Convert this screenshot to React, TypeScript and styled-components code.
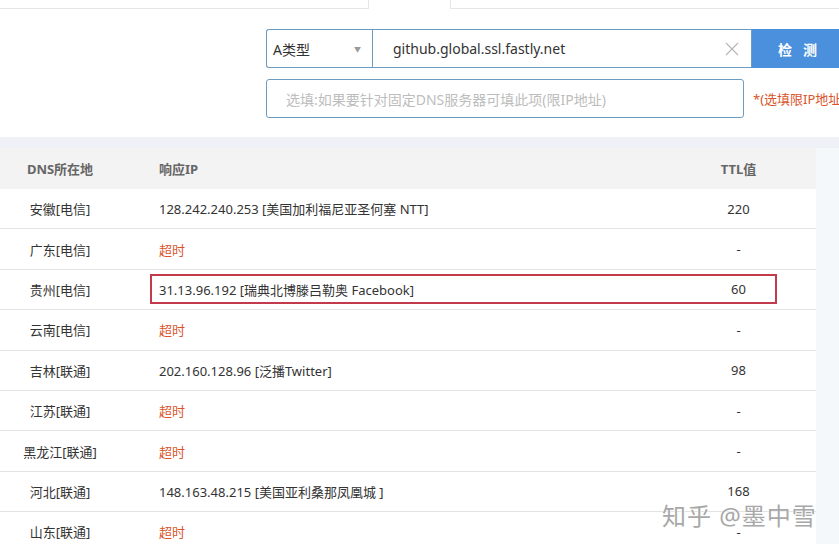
import React from "react";
import styled, { createGlobalStyle } from "styled-components";

const GlobalStyle = createGlobalStyle`
  html, body {
    margin: 0;
    padding: 0;
    background: #fff;
    overflow: hidden;
  }
  * {
    box-sizing: border-box;
    font-family: "Microsoft YaHei", "Noto Sans", "Noto Sans CJK SC", sans-serif;
  }
`;

// results of the DNS check
const rows = [
  { place: "安徽[电信]", ip: "128.242.240.253 [美国加利福尼亚圣何塞 NTT]", ttl: "220" },
  { place: "广东[电信]", timeout: true },
  { place: "贵州[电信]", ip: "31.13.96.192 [瑞典北博滕吕勒奥 Facebook]", ttl: "60", marked: true },
  { place: "云南[电信]", timeout: true },
  { place: "吉林[联通]", ip: "202.160.128.96 [泛播Twitter]", ttl: "98" },
  { place: "江苏[联通]", timeout: true },
  { place: "黑龙江[联通]", timeout: true },
  { place: "河北[联通]", ip: "148.163.48.215 [美国亚利桑那凤凰城 ]", ttl: "168" },
  { place: "山东[联通]", timeout: true },
];

export default function App() {
  return (
    <Page>
      <GlobalStyle />
      <Tabs>
        <TabFill width={368} />
        <ActiveTab />
        <TabFill />
      </Tabs>

      <Form>
        <FormRow>
          <Select>
            <span>A类型</span>
            <Caret>▼</Caret>
          </Select>
          <DomainInput>
            <span>github.global.ssl.fastly.net</span>
            <svg width="14" height="14" viewBox="0 0 14 14">
              <path d="M1 1L13 13M13 1L1 13" stroke="#b5b5b5" strokeWidth="1.1" />
            </svg>
          </DomainInput>
          <CheckButton>
            <span>检</span>
            <span>测</span>
          </CheckButton>
        </FormRow>
        <FormRow>
          <ServerInput>选填:如果要针对固定DNS服务器可填此项(限IP地址)</ServerInput>
          <Note>*(选填限IP地址)</Note>
        </FormRow>
      </Form>

      <Band />

      <Body>
        <Table>
          <HeadRow>
            <PlaceCell>DNS所在地</PlaceCell>
            <Result>
              <IpCell>响应IP</IpCell>
              <TtlCell>TTL值</TtlCell>
            </Result>
          </HeadRow>
          {rows.map((r) => (
            <Row key={r.place}>
              <PlaceCell>{r.place}</PlaceCell>
              <Result marked={r.marked}>
                {r.timeout ? (
                  <IpCell><Timeout>超时</Timeout></IpCell>
                ) : (
                  <IpCell>{r.ip}</IpCell>
                )}
                <TtlCell>{r.timeout ? "-" : r.ttl}</TtlCell>
              </Result>
            </Row>
          ))}
        </Table>
        <Side />
        <Watermark>知乎 @墨中雪</Watermark>
      </Body>
    </Page>
  );
}

const Page = styled.main`
  width: 839px;
  height: 544px;
  overflow: hidden;
  display: flex;
  flex-direction: column;
`;

const Tabs = styled.div`
  display: flex;
  flex: none;
  height: 9px;
`;

const TabFill = styled.div<{ width?: number }>`
  flex: ${({ width }) => (width ? `0 0 ${width}px` : "1")};
  border-bottom: 1px solid #e6e6e6;
`;

const ActiveTab = styled.div`
  flex: 0 0 83px;
  border-left: 1px solid #e6e6e6;
  border-right: 1px solid #e6e6e6;
`;

const Form = styled.div`
  flex: none;
  padding: 20px 0 19px 266px;
  display: flex;
  flex-direction: column;
  gap: 11px;
`;

const FormRow = styled.div`
  display: flex;
  align-items: center;
  height: 39px;
`;

const Select = styled.div`
  flex: 0 0 106px;
  height: 39px;
  border: 1px solid #6d9cc1;
  border-right: none;
  border-radius: 3px 0 0 3px;
  display: flex;
  align-items: center;
  justify-content: space-between;
  padding: 0 11px 0 6px;
  font-size: 14px;
  color: #333;
`;

const Caret = styled.span`
  font-size: 7px;
  color: #999;
`;

const DomainInput = styled.div`
  flex: 0 0 380px;
  height: 39px;
  border: 1px solid #6d9cc1;
  display: flex;
  align-items: center;
  justify-content: space-between;
  padding: 0 12px 0 20px;
  font-size: 14px;
  color: #333;
`;

const CheckButton = styled.div`
  flex: 1;
  height: 39px;
  background: #4a90dc;
  color: #fff;
  font-size: 14px;
  font-weight: bold;
  display: flex;
  align-items: center;
  gap: 11px;
  padding-left: 26px;
`;

const ServerInput = styled.div`
  flex: 0 0 478px;
  height: 39px;
  border: 1px solid #6d9cc1;
  border-radius: 3px;
  display: flex;
  align-items: center;
  padding-left: 19px;
  font-size: 14px;
  color: #bdbdbd;
`;

const Note = styled.div`
  margin-left: 9px;
  font-size: 13px;
  color: #d9542a;
  white-space: nowrap;
`;

const Band = styled.div`
  flex: none;
  height: 11px;
  background: #eef2f6;
`;

const Body = styled.section`
  position: relative;
  flex: 1;
  min-height: 0;
  display: flex;
  overflow: hidden;
`;

const Table = styled.div`
  flex: 0 0 816px;
  display: flex;
  flex-direction: column;
`;

const Side = styled.div`
  flex: 1;
  background: #f5f8fb;
`;

const Row = styled.div`
  display: flex;
  align-items: center;
  height: 40.4px;
  flex: none;
  border-bottom: 1px solid #e3e3e3;
  font-size: 13px;
  color: #333;
`;

const HeadRow = styled(Row)`
  height: 41px;
  background: #f3f3f3;
  border-bottom: none;
  font-weight: bold;
  color: #666;
`;

const PlaceCell = styled.div`
  width: 150px;
  text-align: center;
  padding-right: 30px;
`;

const Result = styled.div<{ marked?: boolean }>`
  width: 627px;
  height: 30px;
  display: flex;
  align-items: center;
  outline: ${({ marked }) => (marked ? "2px solid #c23a4b" : "none")};
  outline-offset: -2px;
`;

const IpCell = styled.div`
  flex: 1;
  padding-left: 9px;
  white-space: nowrap;
`;

const TtlCell = styled.div`
  width: 77px;
  text-align: center;
`;

const Timeout = styled.span`
  color: #d9542a;
`;

const Watermark = styled.div`
  position: absolute;
  left: 662px;
  top: 349px;
  font-size: 24px;
  letter-spacing: 1px;
  color: #a8a8a8;
  text-shadow: 0 0 2px #fff, 0 0 2px #fff;
  white-space: nowrap;
`;
